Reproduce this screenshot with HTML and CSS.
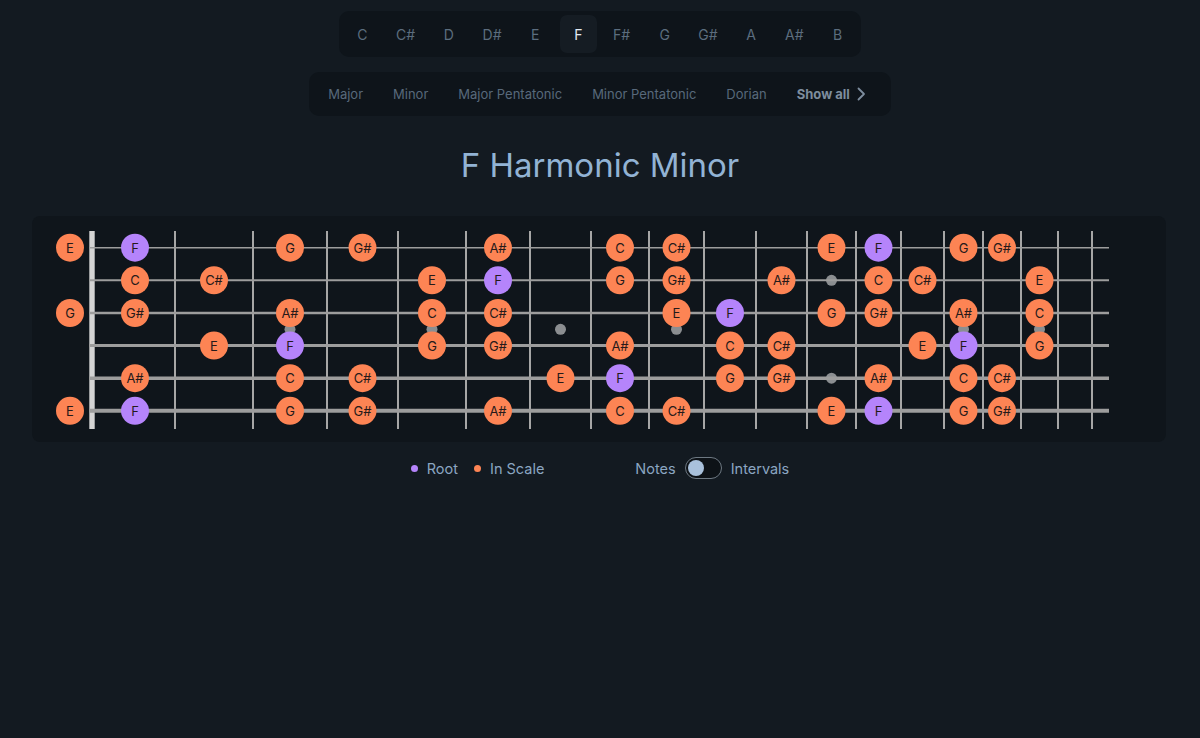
FILE: index.html
```html
<!DOCTYPE html>
<html lang="en">
<head>
<meta charset="utf-8">
<title>F Harmonic Minor</title>
<link rel="stylesheet" href="styles.css">
</head>
<body>
<main class="app">
  <nav class="keys">
    <button class="key">C</button>
    <button class="key">C#</button>
    <button class="key">D</button>
    <button class="key">D#</button>
    <button class="key">E</button>
    <button class="key active">F</button>
    <button class="key">F#</button>
    <button class="key">G</button>
    <button class="key">G#</button>
    <button class="key">A</button>
    <button class="key">A#</button>
    <button class="key">B</button>
  </nav>

  <nav class="scales">
    <button class="scale">Major</button>
    <button class="scale">Minor</button>
    <button class="scale">Major Pentatonic</button>
    <button class="scale">Minor Pentatonic</button>
    <button class="scale">Dorian</button>
    <button class="scale show-all">Show all
      <svg class="chev" width="16" height="14" viewBox="0 0 16 14"><polyline points="2.5,1.5 8,7 2.5,12.5"/></svg>
    </button>
  </nav>

  <h1 class="title">F Harmonic Minor</h1>

  <section class="board">
    <svg class="neck" width="1134" height="226" viewBox="32 216 1134 226">
      <g class="inlays">
        <circle cx="290" cy="329.3" r="5.5"/>
        <circle cx="432" cy="329.3" r="5.5"/>
        <circle cx="560.5" cy="329.3" r="5.5"/>
        <circle cx="676.5" cy="329.3" r="5.5"/>
        <circle cx="831.5" cy="280.3" r="5.5"/>
        <circle cx="831.5" cy="378.2" r="5.5"/>
        <circle cx="963.5" cy="329.3" r="5.5"/>
        <circle cx="1039.5" cy="329.3" r="5.5"/>
      </g>
      <g class="frets">
        <line x1="175" y1="231" x2="175" y2="429"/>
        <line x1="253" y1="231" x2="253" y2="429"/>
        <line x1="327" y1="231" x2="327" y2="429"/>
        <line x1="398" y1="231" x2="398" y2="429"/>
        <line x1="466" y1="231" x2="466" y2="429"/>
        <line x1="530" y1="231" x2="530" y2="429"/>
        <line x1="591" y1="231" x2="591" y2="429"/>
        <line x1="649" y1="231" x2="649" y2="429"/>
        <line x1="704" y1="231" x2="704" y2="429"/>
        <line x1="756" y1="231" x2="756" y2="429"/>
        <line x1="807" y1="231" x2="807" y2="429"/>
        <line x1="856" y1="231" x2="856" y2="429"/>
        <line x1="901" y1="231" x2="901" y2="429"/>
        <line x1="944" y1="231" x2="944" y2="429"/>
        <line x1="983" y1="231" x2="983" y2="429"/>
        <line x1="1021" y1="231" x2="1021" y2="429"/>
        <line x1="1058" y1="231" x2="1058" y2="429"/>
        <line x1="1092" y1="231" x2="1092" y2="429"/>
      </g>
      <rect class="nut" x="89.3" y="231" width="5.4" height="198"/>
      <g class="strings">
        <line x1="89" y1="247.7" x2="1109" y2="247.7" stroke-width="1.6"/>
        <line x1="89" y1="280.3" x2="1109" y2="280.3" stroke-width="2"/>
        <line x1="89" y1="313" x2="1109" y2="313" stroke-width="2.5"/>
        <line x1="89" y1="345.6" x2="1109" y2="345.6" stroke-width="3"/>
        <line x1="89" y1="378.2" x2="1109" y2="378.2" stroke-width="3.5"/>
        <line x1="89" y1="410.8" x2="1109" y2="410.8" stroke-width="4"/>
      </g>

      <g class="notes">
        <!-- string 1 : high E -->
        <circle class="in" cx="70" cy="247.7" r="14"/><text x="70" y="247.7">E</text>
        <circle class="root" cx="135" cy="247.7" r="14"/><text x="135" y="247.7">F</text>
        <circle class="in" cx="290" cy="247.7" r="14"/><text x="290" y="247.7">G</text>
        <circle class="in" cx="362.5" cy="247.7" r="14"/><text x="362.5" y="247.7">G#</text>
        <circle class="in" cx="498" cy="247.7" r="14"/><text x="498" y="247.7">A#</text>
        <circle class="in" cx="620" cy="247.7" r="14"/><text x="620" y="247.7">C</text>
        <circle class="in" cx="676.5" cy="247.7" r="14"/><text x="676.5" y="247.7">C#</text>
        <circle class="in" cx="831.5" cy="247.7" r="14"/><text x="831.5" y="247.7">E</text>
        <circle class="root" cx="878.5" cy="247.7" r="14"/><text x="878.5" y="247.7">F</text>
        <circle class="in" cx="963.5" cy="247.7" r="14"/><text x="963.5" y="247.7">G</text>
        <circle class="in" cx="1002" cy="247.7" r="14"/><text x="1002" y="247.7">G#</text>

        <!-- string 2 : B -->
        <circle class="in" cx="135" cy="280.3" r="14"/><text x="135" y="280.3">C</text>
        <circle class="in" cx="214" cy="280.3" r="14"/><text x="214" y="280.3">C#</text>
        <circle class="in" cx="432" cy="280.3" r="14"/><text x="432" y="280.3">E</text>
        <circle class="root" cx="498" cy="280.3" r="14"/><text x="498" y="280.3">F</text>
        <circle class="in" cx="620" cy="280.3" r="14"/><text x="620" y="280.3">G</text>
        <circle class="in" cx="676.5" cy="280.3" r="14"/><text x="676.5" y="280.3">G#</text>
        <circle class="in" cx="781.5" cy="280.3" r="14"/><text x="781.5" y="280.3">A#</text>
        <circle class="in" cx="878.5" cy="280.3" r="14"/><text x="878.5" y="280.3">C</text>
        <circle class="in" cx="922.5" cy="280.3" r="14"/><text x="922.5" y="280.3">C#</text>
        <circle class="in" cx="1039.5" cy="280.3" r="14"/><text x="1039.5" y="280.3">E</text>

        <!-- string 3 : G -->
        <circle class="in" cx="70" cy="313" r="14"/><text x="70" y="313">G</text>
        <circle class="in" cx="135" cy="313" r="14"/><text x="135" y="313">G#</text>
        <circle class="in" cx="290" cy="313" r="14"/><text x="290" y="313">A#</text>
        <circle class="in" cx="432" cy="313" r="14"/><text x="432" y="313">C</text>
        <circle class="in" cx="498" cy="313" r="14"/><text x="498" y="313">C#</text>
        <circle class="in" cx="676.5" cy="313" r="14"/><text x="676.5" y="313">E</text>
        <circle class="root" cx="730" cy="313" r="14"/><text x="730" y="313">F</text>
        <circle class="in" cx="831.5" cy="313" r="14"/><text x="831.5" y="313">G</text>
        <circle class="in" cx="878.5" cy="313" r="14"/><text x="878.5" y="313">G#</text>
        <circle class="in" cx="963.5" cy="313" r="14"/><text x="963.5" y="313">A#</text>
        <circle class="in" cx="1039.5" cy="313" r="14"/><text x="1039.5" y="313">C</text>

        <!-- string 4 : D -->
        <circle class="in" cx="214" cy="345.6" r="14"/><text x="214" y="345.6">E</text>
        <circle class="root" cx="290" cy="345.6" r="14"/><text x="290" y="345.6">F</text>
        <circle class="in" cx="432" cy="345.6" r="14"/><text x="432" y="345.6">G</text>
        <circle class="in" cx="498" cy="345.6" r="14"/><text x="498" y="345.6">G#</text>
        <circle class="in" cx="620" cy="345.6" r="14"/><text x="620" y="345.6">A#</text>
        <circle class="in" cx="730" cy="345.6" r="14"/><text x="730" y="345.6">C</text>
        <circle class="in" cx="781.5" cy="345.6" r="14"/><text x="781.5" y="345.6">C#</text>
        <circle class="in" cx="922.5" cy="345.6" r="14"/><text x="922.5" y="345.6">E</text>
        <circle class="root" cx="963.5" cy="345.6" r="14"/><text x="963.5" y="345.6">F</text>
        <circle class="in" cx="1039.5" cy="345.6" r="14"/><text x="1039.5" y="345.6">G</text>

        <!-- string 5 : A -->
        <circle class="in" cx="135" cy="378.2" r="14"/><text x="135" y="378.2">A#</text>
        <circle class="in" cx="290" cy="378.2" r="14"/><text x="290" y="378.2">C</text>
        <circle class="in" cx="362.5" cy="378.2" r="14"/><text x="362.5" y="378.2">C#</text>
        <circle class="in" cx="560.5" cy="378.2" r="14"/><text x="560.5" y="378.2">E</text>
        <circle class="root" cx="620" cy="378.2" r="14"/><text x="620" y="378.2">F</text>
        <circle class="in" cx="730" cy="378.2" r="14"/><text x="730" y="378.2">G</text>
        <circle class="in" cx="781.5" cy="378.2" r="14"/><text x="781.5" y="378.2">G#</text>
        <circle class="in" cx="878.5" cy="378.2" r="14"/><text x="878.5" y="378.2">A#</text>
        <circle class="in" cx="963.5" cy="378.2" r="14"/><text x="963.5" y="378.2">C</text>
        <circle class="in" cx="1002" cy="378.2" r="14"/><text x="1002" y="378.2">C#</text>

        <!-- string 6 : low E -->
        <circle class="in" cx="70" cy="410.8" r="14"/><text x="70" y="410.8">E</text>
        <circle class="root" cx="135" cy="410.8" r="14"/><text x="135" y="410.8">F</text>
        <circle class="in" cx="290" cy="410.8" r="14"/><text x="290" y="410.8">G</text>
        <circle class="in" cx="362.5" cy="410.8" r="14"/><text x="362.5" y="410.8">G#</text>
        <circle class="in" cx="498" cy="410.8" r="14"/><text x="498" y="410.8">A#</text>
        <circle class="in" cx="620" cy="410.8" r="14"/><text x="620" y="410.8">C</text>
        <circle class="in" cx="676.5" cy="410.8" r="14"/><text x="676.5" y="410.8">C#</text>
        <circle class="in" cx="831.5" cy="410.8" r="14"/><text x="831.5" y="410.8">E</text>
        <circle class="root" cx="878.5" cy="410.8" r="14"/><text x="878.5" y="410.8">F</text>
        <circle class="in" cx="963.5" cy="410.8" r="14"/><text x="963.5" y="410.8">G</text>
        <circle class="in" cx="1002" cy="410.8" r="14"/><text x="1002" y="410.8">G#</text>
      </g>
    </svg>
  </section>

  <footer class="legend">
    <div class="legend-group">
      <span class="swatch swatch-root"></span><span>Root</span>
      <span class="swatch swatch-in"></span><span>In Scale</span>
    </div>
    <div class="legend-group toggle-group">
      <span>Notes</span>
      <span class="toggle"><span class="knob"></span></span>
      <span>Intervals</span>
    </div>
  </footer>
</main>
</body>
</html>
```

FILE: styles.css
```css
* { box-sizing: border-box; }

html, body {
  margin: 0;
  padding: 0;
  background: #131a21;
  height: 100%;
}

body {
  font-family: Inter, "Noto Sans", sans-serif;
  color: #8ea8c2;
}

.app {
  display: flex;
  flex-direction: column;
  align-items: center;
  padding-top: 11px;
}

button {
  font-family: inherit;
  border: 0;
  background: none;
  cursor: pointer;
  padding: 0;
}

/* key selector */
.keys {
  display: flex;
  gap: 6.2px;
  padding: 4px 5px;
  background: #0e141a;
  border-radius: 10px;
}

.key {
  width: 37px;
  height: 38px;
  border-radius: 7px;
  font-size: 14px;
  color: #5c6d7e;
}

.key.active {
  background: #151c23;
  color: #e2eaf2;
}

/* scale selector */
.scales {
  display: flex;
  align-items: center;
  height: 44px;
  margin-top: 15px;
  padding: 0 4px;
  background: #0e141a;
  border-radius: 10px;
}

.scale {
  padding: 0 15px;
  height: 44px;
  font-size: 13px;
  color: #58697b;
  display: flex;
  align-items: center;
}

.show-all {
  font-weight: 700;
  color: #7d8d9e;
  gap: 6px;
}

.chev {
  display: block;
}

.chev polyline {
  fill: none;
  stroke: #7d8d9e;
  stroke-width: 1.8;
  stroke-linecap: round;
  stroke-linejoin: round;
}

/* title */
.title {
  margin: 29px 0 0;
  font-size: 33px;
  line-height: 40px;
  font-weight: 400;
  color: #92b3d4;
}

/* fretboard */
.board {
  align-self: flex-start;
  margin: 31px 0 0 32px;
  width: 1134px;
  height: 226px;
  background: #0f151b;
  border-radius: 8px;
}

.neck {
  display: block;
}

.inlays circle { fill: #8b8e91; }

.frets line {
  stroke: #a6a6a6;
  stroke-width: 2;
}

.nut { fill: #d4d4d4; }

.strings line { stroke: #9d9d9d; }

.notes circle.in { fill: #fd8454; }
.notes circle.root { fill: #b584fb; }

.notes text {
  font-family: Inter, "Noto Sans", sans-serif;
  font-size: 13px;
  fill: #261a1a;
  text-anchor: middle;
  dominant-baseline: central;
}

/* legend */
.legend {
  display: flex;
  align-items: center;
  gap: 91px;
  margin-top: 15px;
  font-size: 14.5px;
  color: #8ba6c1;
}

.legend-group {
  display: flex;
  align-items: center;
}

.swatch {
  width: 7px;
  height: 7px;
  border-radius: 50%;
  margin-right: 9px;
}

.swatch-in { margin-left: 16px; }
.swatch-root { background: #b584fb; }
.swatch-in { background: #fd8454; }

.toggle-group { gap: 9px; }

.toggle {
  width: 37px;
  height: 22px;
  border: 1.5px solid #6d7882;
  border-radius: 11px;
  background: #0d1217;
  display: flex;
  align-items: center;
  padding-left: 2.5px;
}

.knob {
  width: 16px;
  height: 16px;
  border-radius: 50%;
  background: #a9c1dc;
}
```
